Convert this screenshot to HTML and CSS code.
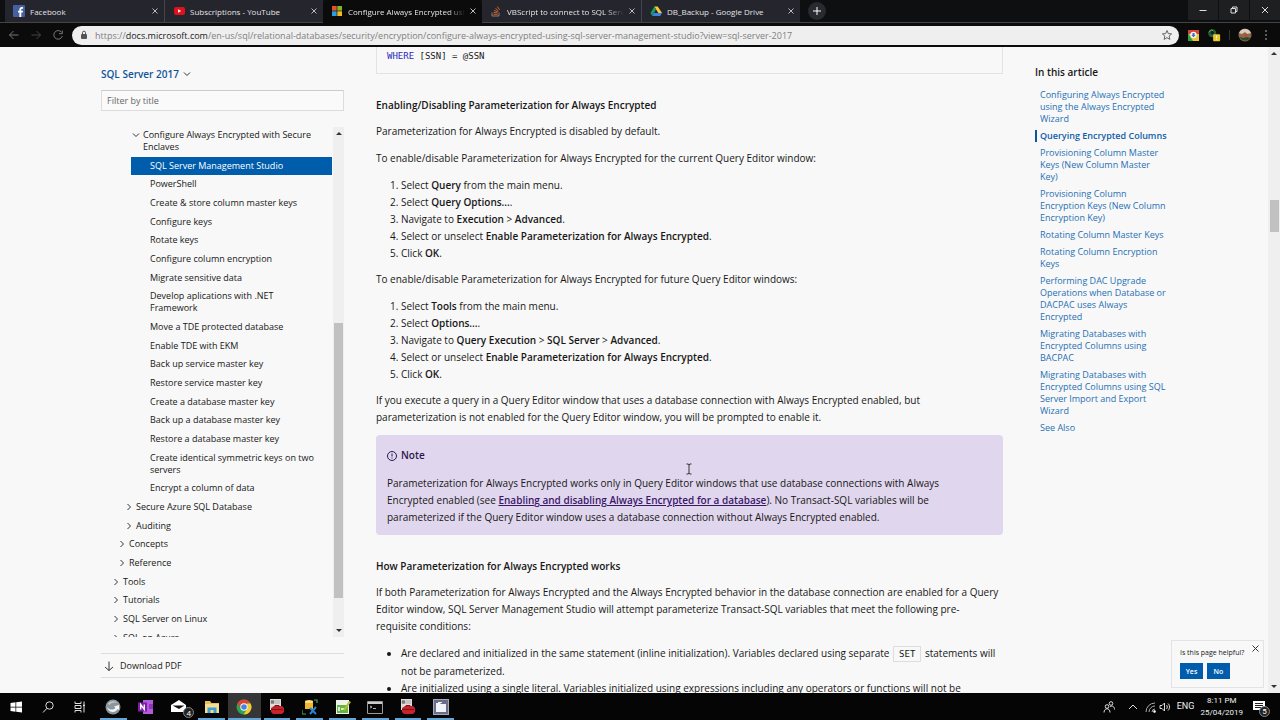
FILE: index.html
```html
<!DOCTYPE html>
<html lang="en">
<head>
  <meta charset="UTF-8">
  <title>Configure Always Encrypted using SQL Server Management Studio</title>
  <link rel="stylesheet" href="styles.css">
</head>
<body>
  <!-- tabs -->
  <header class="tab-strip">
    <div class="tab">
      <svg class="favicon" viewBox="0 0 12 12"><rect width="12" height="12" rx="1" fill="#4460a0"/><path d="M8.300 12V7.500h1.500l.2-1.800H8.300V4.700c0-.6.2-.9.900-.9h.9V2.200C9.900 2.100 9.400 2 8.800 2 7.300 2 6.400 2.900 6.400 4.500v1.200H5v1.800h1.400V12z" fill="#fff"/></svg>
      <span class="tab-name">Facebook</span>
      <button class="tab-close" aria-label="Close tab"><svg viewBox="0 0 6 6"><path d="M.5.5l5 5M5.500.5l-5 5"/></svg></button>
    </div>
    <div class="tab divided">
      <svg class="favicon" viewBox="0 0 12 12"><rect x="1" y="2" width="11" height="8" rx="2" fill="#e0101c"/><path d="M5 4.200v3.600L8.200 6z" fill="#fff"/></svg>
      <span class="tab-name">Subscriptions - YouTube</span>
      <button class="tab-close" aria-label="Close tab"><svg viewBox="0 0 6 6"><path d="M.5.5l5 5M5.500.5l-5 5"/></svg></button>
    </div>
    <div class="tab active">
      <svg class="favicon" viewBox="0 0 12 12"><path fill="#e8502c" d="M1 1h4.700v4.700H1z"/><path fill="#7db82b" d="M6.300 1H11v4.700H6.300z"/><path fill="#22a0e8" d="M1 6.300h4.700V11H1z"/><path fill="#fbb81a" d="M6.300 6.300H11V11H6.300z"/></svg>
      <span class="tab-name faded">Configure Always Encrypted using</span>
      <button class="tab-close" aria-label="Close tab"><svg viewBox="0 0 6 6"><path d="M.5.5l5 5M5.500.5l-5 5"/></svg></button>
    </div>
    <div class="tab">
      <svg class="favicon" viewBox="0 0 12 12" fill="none" stroke="#d2652b"><path d="M2 7.500v3.500h7V7.500" stroke="#8d7e72"/><path d="M3.500 9.300h4M3.600 7.400l4 .6M4.200 5.400l3.700 1.500M5.500 3.400l3 2.600M7.300 1.500l2.300 3.300"/></svg>
      <span class="tab-name faded">VBScript to connect to SQL Server</span>
      <button class="tab-close" aria-label="Close tab"><svg viewBox="0 0 6 6"><path d="M.5.5l5 5M5.500.5l-5 5"/></svg></button>
    </div>
    <div class="tab divided">
      <svg class="favicon" viewBox="0 0 12 12"><path d="M4.300 1.500h3.400L12 8H8.400z" fill="#fbcb2e"/><path d="M4.300 1.500L6 4.500 2.200 11 .5 8z" fill="#179c5c"/><path d="M4 8h8l-1.800 3H2.200z" fill="#3f80e8"/></svg>
      <span class="tab-name">DB_Backup - Google Drive</span>
      <button class="tab-close" aria-label="Close tab"><svg viewBox="0 0 6 6"><path d="M.5.5l5 5M5.500.5l-5 5"/></svg></button>
    </div>
    <button class="new-tab" aria-label="New tab"><svg viewBox="0 0 8 8"><path d="M4 0v8M0 4h8"/></svg></button>
    <div class="window-buttons">
      <button aria-label="Minimize"><svg viewBox="0 0 8 8"><path d="M.5 4.500h7"/></svg></button>
      <button aria-label="Restore"><svg viewBox="0 0 8 8"><path d="M1 2.500h4.500V7H1zM2.500 2.500V1H7v4.500H5.500"/></svg></button>
      <button aria-label="Close"><svg viewBox="0 0 8 8"><path d="M1 1l6 6M7 1L1 7"/></svg></button>
    </div>
  </header>

  <nav class="toolbar">
    <button aria-label="Back"><svg viewBox="0 0 12 12"><path d="M10.500 6h-9M5.500 2l-4 4 4 4"/></svg></button>
    <button class="dim" aria-label="Forward"><svg viewBox="0 0 12 12"><path d="M1.500 6h9M6.500 2l4 4-4 4"/></svg></button>
    <button aria-label="Reload"><svg viewBox="0 0 12 12"><path d="M9.500 3.200A4.300 4.300 0 1 0 10.300 7M10.300 1.500v3.200H7"/></svg></button>
    <div class="address">
      <svg class="lock" viewBox="0 0 8 10"><rect x="1" y="4" width="6" height="5" rx="1" fill="#555"/><path d="M2.500 4V2.700a1.500 1.500 0 0 1 3 0V4" fill="none" stroke="#555"/></svg>
      <p class="url">https://<b>docs.microsoft.com</b>/en-us/sql/relational-databases/security/encryption/configure-always-encrypted-using-sql-server-management-studio?view=sql-server-2017</p>
      <svg class="star" viewBox="0 0 12 12"><path d="M6 1.500l1.300 3.100 3.300.3-2.500 2.200.8 3.300L6 8.700l-2.900 1.700.8-3.300-2.500-2.200 3.300-.3z" fill="none" stroke="#666"/></svg>
    </div>
    <div class="extensions">
      <svg viewBox="0 0 12 12"><rect x="1" y="1" width="11" height="11" fill="#e8c532"/><path d="M1 1h11v4H1z" fill="#d94336"/><path d="M1 4l5 8H1z" fill="#2f9e51"/><circle cx="6.500" cy="6" r="3.200" fill="#f3f3f3"/><path d="M5.500 4h2v2h1.200L6.500 8.300 4.300 6h1.200z" fill="#3c6cc4"/></svg>
      <svg class="wide" viewBox="0 0 16 16"><circle cx="6" cy="6" r="4.500" fill="#25602f"/><circle cx="6" cy="5.500" r="2" fill="#111d42"/><path d="M2 5l3-3 2 1" stroke="#7cae3d" fill="none"/><rect x="7" y="7" width="8" height="8" rx="1" fill="#e7c82f"/><path d="M11 8.500v3M11 12.500v1" stroke="#fff"/></svg>
      <i class="divider"></i>
      <svg class="avatar" viewBox="0 0 14 14"><circle cx="7" cy="7" r="6.500" fill="#8c6a4a"/><path d="M1 5a6.500 6.500 0 0 1 12 0L9 6 7 4 4 6z" fill="#d8cfc0"/><path d="M1.500 9l4 1 3-1 4 1a6.500 6.500 0 0 1-11-1z" fill="#34472a"/><circle cx="8" cy="7" r="1.500" fill="#c0492c"/></svg>
      <svg viewBox="0 0 12 12" fill="#777"><circle cx="6" cy="2" r="1"/><circle cx="6" cy="6" r="1"/><circle cx="6" cy="10" r="1"/></svg>
    </div>
  </nav>

  <!-- page -->
  <div class="viewport">
    <div class="layout">
      <aside class="sidebar">
        <a class="version" href="#">SQL Server 2017 <svg viewBox="0 0 8 8"><path d="M1 2.500l3 3 3-3"/></svg></a>
        <input class="filter" type="text" placeholder="Filter by title" aria-label="Filter by title">
        <div class="tree">
          <ul>
            <li class="level-4 branch open"><svg viewBox="0 0 8 8"><path d="M1 2.500l3 3 3-3"/></svg><a href="#">Configure Always Encrypted with Secure Enclaves</a></li>
            <li class="leaf selected"><a href="#">SQL Server Management Studio</a></li>
            <li class="leaf"><a href="#">PowerShell</a></li>
            <li class="leaf"><a href="#">Create &amp; store column master keys</a></li>
            <li class="leaf"><a href="#">Configure keys</a></li>
            <li class="leaf"><a href="#">Rotate keys</a></li>
            <li class="leaf"><a href="#">Configure column encryption</a></li>
            <li class="leaf"><a href="#">Migrate sensitive data</a></li>
            <li class="leaf"><a href="#">Develop aplications with .NET Framework</a></li>
            <li class="leaf"><a href="#">Move a TDE protected database</a></li>
            <li class="leaf"><a href="#">Enable TDE with EKM</a></li>
            <li class="leaf"><a href="#">Back up service master key</a></li>
            <li class="leaf"><a href="#">Restore service master key</a></li>
            <li class="leaf"><a href="#">Create a database master key</a></li>
            <li class="leaf"><a href="#">Back up a database master key</a></li>
            <li class="leaf"><a href="#">Restore a database master key</a></li>
            <li class="leaf"><a href="#">Create identical symmetric keys on two servers</a></li>
            <li class="leaf"><a href="#">Encrypt a column of data</a></li>
            <li class="level-3 branch"><svg viewBox="0 0 8 8"><path d="M2.500 1l3 3-3 3"/></svg><a href="#">Secure Azure SQL Database</a></li>
            <li class="level-3 branch"><svg viewBox="0 0 8 8"><path d="M2.500 1l3 3-3 3"/></svg><a href="#">Auditing</a></li>
            <li class="level-2 branch"><svg viewBox="0 0 8 8"><path d="M2.500 1l3 3-3 3"/></svg><a href="#">Concepts</a></li>
            <li class="level-2 branch"><svg viewBox="0 0 8 8"><path d="M2.500 1l3 3-3 3"/></svg><a href="#">Reference</a></li>
            <li class="level-1 branch"><svg viewBox="0 0 8 8"><path d="M2.500 1l3 3-3 3"/></svg><a href="#">Tools</a></li>
            <li class="level-1 branch"><svg viewBox="0 0 8 8"><path d="M2.500 1l3 3-3 3"/></svg><a href="#">Tutorials</a></li>
            <li class="level-1 branch"><svg viewBox="0 0 8 8"><path d="M2.500 1l3 3-3 3"/></svg><a href="#">SQL Server on Linux</a></li>
            <li class="level-1 branch"><svg viewBox="0 0 8 8"><path d="M2.500 1l3 3-3 3"/></svg><a href="#">SQL on Azure</a></li>
          </ul>
          <div class="scrollbar tree-bar">
            <svg viewBox="0 0 6 6"><path d="M0 5h6L3 2z"/></svg>
            <div class="track"><div class="thumb"></div></div>
            <svg viewBox="0 0 6 6"><path d="M0 1h6L3 4z"/></svg>
          </div>
        </div>
        <a class="download" href="#"><svg viewBox="0 0 10 10"><path d="M5 .5v9M1 6l4 3.500L9 6"/></svg>Download PDF</a>
      </aside>

      <main class="article">
        <pre class="code"><code><span class="keyword">WHERE</span> [SSN] = @SSN</code></pre>
        <h4>Enabling/Disabling Parameterization for Always Encrypted</h4>
        <p>Parameterization for Always Encrypted is disabled by default.</p>
        <p>To enable/disable Parameterization for Always Encrypted for the current Query Editor window:</p>
        <ol>
          <li>Select <strong>Query</strong> from the main menu.</li>
          <li>Select <strong>Query Options...</strong>.</li>
          <li>Navigate to <strong>Execution</strong> &gt; <strong>Advanced</strong>.</li>
          <li>Select or unselect <strong>Enable Parameterization for Always Encrypted</strong>.</li>
          <li>Click <strong>OK</strong>.</li>
        </ol>
        <p>To enable/disable Parameterization for Always Encrypted for future Query Editor windows:</p>
        <ol>
          <li>Select <strong>Tools</strong> from the main menu.</li>
          <li>Select <strong>Options...</strong>.</li>
          <li>Navigate to <strong>Query Execution</strong> &gt; <strong>SQL Server</strong> &gt; <strong>Advanced</strong>.</li>
          <li>Select or unselect <strong>Enable Parameterization for Always Encrypted</strong>.</li>
          <li>Click <strong>OK</strong>.</li>
        </ol>
        <p>If you execute a query in a Query Editor window that uses a database connection with Always Encrypted enabled, but parameterization is not enabled for the Query Editor window, you will be prompted to enable it.</p>
        <div class="note">
          <p class="note-title"><svg viewBox="0 0 10 10"><circle cx="5" cy="5" r="4.500"/><path d="M5 2.500v3M5 6.500v1"/></svg>Note</p>
          <p>Parameterization for Always Encrypted works only in Query Editor windows that use database connections with Always Encrypted enabled (see <a href="#">Enabling and disabling Always Encrypted for a database</a>). No Transact-SQL variables will be parameterized if the Query Editor window uses a database connection without Always Encrypted enabled.</p>
        </div>
        <h4>How Parameterization for Always Encrypted works</h4>
        <p>If both Parameterization for Always Encrypted and the Always Encrypted behavior in the database connection are enabled for a Query Editor window, SQL Server Management Studio will attempt parameterize Transact-SQL variables that meet the following pre-requisite conditions:</p>
        <ul>
          <li>Are declared and initialized in the same statement (inline initialization). Variables declared using separate <code>SET</code> statements will not be parameterized.</li>
          <li>Are initialized using a single literal. Variables initialized using expressions including any operators or functions will not be parameterized.</li>
        </ul>
      </main>

      <nav class="toc">
        <h3>In this article</h3>
        <ul>
          <li><a href="#">Configuring Always Encrypted using the Always Encrypted Wizard</a></li>
          <li class="current"><a href="#">Querying Encrypted Columns</a></li>
          <li><a href="#">Provisioning Column Master Keys (New Column Master Key)</a></li>
          <li><a href="#">Provisioning Column Encryption Keys (New Column Encryption Key)</a></li>
          <li><a href="#">Rotating Column Master Keys</a></li>
          <li><a href="#">Rotating Column Encryption Keys</a></li>
          <li><a href="#">Performing DAC Upgrade Operations when Database or DACPAC uses Always Encrypted</a></li>
          <li><a href="#">Migrating Databases with Encrypted Columns using BACPAC</a></li>
          <li><a href="#">Migrating Databases with Encrypted Columns using SQL Server Import and Export Wizard</a></li>
          <li><a href="#">See Also</a></li>
        </ul>
      </nav>
    </div>

    <div class="scrollbar page-bar">
      <svg viewBox="0 0 6 6"><path d="M0 5h6L3 2z"/></svg>
      <div class="track"><div class="thumb"></div></div>
      <svg viewBox="0 0 6 6"><path d="M0 1h6L3 4z"/></svg>
    </div>

    <div class="feedback">
      <p>Is this page helpful?</p>
      <button class="answer">Yes</button>
      <button class="answer">No</button>
      <button class="dismiss" aria-label="Dismiss"><svg viewBox="0 0 7 7"><path d="M.5.5l6 6M6.500.5l-6 6"/></svg></button>
    </div>
    <svg class="cursor" viewBox="0 0 6 12"><path d="M.5 1H2l1 .7L4 1h1.500M3 1.500v9M.5 11H2l1-.7 1 .7h1.500"/></svg>
  </div>

  <!-- taskbar -->
  <footer class="taskbar">
    <div class="system">
      <button aria-label="Start"><svg viewBox="0 0 16 16" fill="#fff"><path d="M2.500 4l5-.7v4.400h-5zM8.200 3.200L14 2.400v5.300H8.200zM2.500 8.400h5v4.300l-5-.7zM8.200 8.400H14v5.200l-5.800-.8z"/></svg></button>
      <button aria-label="Search"><svg viewBox="0 0 16 16" fill="none" stroke="#ddd"><circle cx="9.500" cy="6.500" r="3.700"/><path d="M7 9.300l-4 4.200"/></svg></button>
      <button aria-label="Task view"><svg viewBox="0 0 16 16" fill="none" stroke="#ddd"><path d="M3 2.500v2h6v-2M3 13.500v-2h6v2M3 6.500h6v3H3zM12 2.500v3M12 8v5.500"/><path d="M11 6.500h2" stroke-width="2"/></svg></button>
    </div>
    <div class="apps">
      <button class="running" aria-label="Browser"><svg viewBox="0 0 16 16"><circle cx="8" cy="8" r="7.500" fill="#8c979d"/><path d="M2 8c2 3 6 3.500 8.500 1L9 7.500 14 6v5l-1.500-1C10 15 3.500 13.500 2 8z" fill="#f4f6f7"/><path d="M3 4.500C6 1.500 10 1.500 12.500 4 9.500 3 6 3.500 4.500 6z" fill="#c3cace"/></svg></button>
      <button aria-label="OneNote"><svg viewBox="0 0 16 16"><path d="M5 1h10v14H5z" fill="#b45bdc"/><path d="M11 5h4v5h-4z" fill="#8f35bd"/><path d="M0 3.500h9v9H0z" fill="#7a1fa6"/><path d="M2.700 10.500v-5l3.600 5v-5" fill="none" stroke="#fff" stroke-width="1.300"/></svg></button>
      <button class="mail" aria-label="Mail"><svg viewBox="0 0 16 16"><path d="M0 6l8-5 7 5v7H0z" fill="#fff"/><path d="M1.500 6.500h12L8 10z" fill="#111"/></svg><span class="count">4</span></button>
      <button class="running" aria-label="File Explorer"><svg viewBox="0 0 16 16"><path d="M1 2h5l1.500 2H15v10H1z" fill="#e8bd5b"/><path d="M1 5h14v9H1z" fill="#f8dd91"/><path d="M3.500 14V8.500h9V14h-3v-3h-3v3z" fill="#3ba0d5"/></svg></button>
      <button class="running focused" aria-label="Chrome"><svg viewBox="0 0 16 16"><circle cx="8" cy="8" r="7.500" fill="#31a350"/><path d="M1.500 4.200A7.500 7.500 0 0 1 14.500 4.400H8L4.800 9.800z" fill="#df4334"/><path d="M14.500 4.400A7.500 7.500 0 0 1 7.700 15.500L11.200 9.700 11 4.400z" fill="#f8ca32"/><circle cx="8" cy="8" r="3.700" fill="#fff"/><circle cx="8" cy="8" r="2.800" fill="#4285e8"/></svg></button>
      <button class="running" aria-label="Toolbox"><svg viewBox="0 0 16 16"><path d="M1 0h11v11H1z" fill="#dfdedb"/><path d="M2 1.500h3v3H2zM6 2h5M6 4h5" fill="#777" stroke="#888" stroke-width=".6"/><path d="M2 9l3-2h8l2 2v4l-2 2H4l-2-2z" fill="#c8232c"/><path d="M6 8V6.500h4V8M2 10.500h12" fill="none" stroke="#7e1218"/></svg></button>
      <button class="running" aria-label="Data tools"><svg viewBox="0 0 16 16"><path d="M3 2h8v8H3z" fill="#f1b72b"/><ellipse cx="7" cy="2.500" rx="4" ry="1.500" fill="#ffe17c"/><path d="M12 1h3v3M0 11v4h4" fill="none" stroke="#4da54a" stroke-width="1.200"/><path d="M8 9l6 6M14 8l-6 7" stroke="#2682d4" stroke-width="2"/></svg></button>
      <button class="running" aria-label="Editor"><svg viewBox="0 0 16 16"><path d="M1 1h13v14H1z" fill="#eef2e8"/><path d="M2 6h11v8H2z" fill="#65b441"/><path d="M4 8v4M6 10h4" stroke="#fff" stroke-width="1.500"/><path d="M8 11l6-9 2 1-6 8.500z" fill="#b6bd31"/></svg></button>
      <button class="running" aria-label="Command prompt"><svg viewBox="0 0 16 16"><path d="M.5 2.500h15v12H.5z" fill="#080808" stroke="#9a9a9a"/><path d="M1 3h14v2H1z" fill="#ccc"/><path d="M3 7l2 1-2 1M6 9.500h3" fill="none" stroke="#ddd" stroke-width=".8"/></svg></button>
      <button class="running" aria-label="Toolbox"><svg viewBox="0 0 16 16"><path d="M1 0h11v11H1z" fill="#dfdedb"/><path d="M2 1.500h3v3H2zM6 2h5M6 4h5" fill="#777" stroke="#888" stroke-width=".6"/><path d="M2 9l3-2h8l2 2v4l-2 2H4l-2-2z" fill="#c8232c"/><path d="M6 8V6.500h4V8M2 10.500h12" fill="none" stroke="#7e1218"/></svg></button>
      <button class="running" aria-label="Recorder"><svg viewBox="0 0 16 16"><path d="M0 0h16v16H0z" fill="#a5a8bb"/><path d="M1 1h14v14H1z" fill="#696d88"/><path d="M3 4h4l1 1h5v8H3z" fill="#f2f3f8"/><path d="M5 3h4v1H5z" fill="#f2f3f8"/></svg></button>
    </div>
    <div class="tray">
      <svg viewBox="0 0 12 12"><circle cx="4" cy="5.500" r="1.800"/><path d="M1 11.500c0-5 6-5 6 0"/><circle cx="8" cy="2.500" r="1.800"/><path d="M7 6c2-2 4.500-.5 4.500 2.500"/></svg>
      <svg class="chevron" viewBox="0 0 12 12"><path d="M2 8l4-4 4 4"/></svg>
      <svg viewBox="0 0 12 12"><path d="M2 11A9 9 0 0 1 11 2M5 11a6 6 0 0 1 6-6M8 11a3 3 0 0 1 3-3" stroke="#aaa"/><circle cx="10.500" cy="10.500" r="1" fill="#fff"/></svg>
      <svg viewBox="0 0 12 12"><path d="M1 4.500h2l2.500-2.500v8L3 7.500H1zM7.500 4c1 1 1 3 0 4M9 2.500c2 2 2 5 0 7"/></svg>
      <span class="lang">ENG</span>
      <time>8:11 PM<br>25/04/2019</time>
      <button class="alerts" aria-label="Notifications"><svg viewBox="0 0 12 12"><path d="M0 0h12v9H9v3L6 9H0z" fill="#fff" stroke="none"/><path d="M2 2.500h8M2 4.500h8M2 6.500h6" stroke="#222"/></svg><span class="count">5</span></button>
    </div>
  </footer>
</body>
</html>
```
FILE: styles.css
```css
* {
  box-sizing: border-box;
  margin: 0;
  padding: 0;
}

body {
  font-family: "Open Sans", "Noto Sans", sans-serif;
  font-size: 10px;
  line-height: 17px;
  color: #171717;
  background: #f8f8f8;
  height: 100vh;
  display: flex;
  flex-direction: column;
  overflow: hidden;
}

button {
  border: none;
  background: none;
  color: inherit;
  font-family: inherit;
  cursor: pointer;
}

svg {
  display: block;
  flex: none;
}

ul {
  list-style: none;
}

a {
  color: inherit;
  text-decoration: none;
}

/* tabs */
.tab-strip {
  display: flex;
  align-items: center;
  height: 23px;
  padding-left: 5px;
  background: #0d0f10;
  border-bottom: 1px solid #444;
}

.tab {
  display: flex;
  align-items: center;
  gap: 5px;
  flex: 0 1 159px;
  min-width: 0;
  height: 22px;
  padding: 0 6px 0 8px;
  background: #25252e;
  color: #e4e4e4;
  font-size: 8px;
}

.tab.active {
  background: #0b0b0b;
  height: 23px;
  border-radius: 6px 6px 0 0;
}

.tab.divided {
  border-left: 1px solid #45454d;
}

.favicon {
  width: 12px;
  height: 12px;
}

.tab-name {
  flex: 1;
  overflow: hidden;
  white-space: nowrap;
}

.tab-name.faded {
  mask-image: linear-gradient(to right, #000 85%, transparent);
}

.tab-close svg {
  width: 6px;
  height: 6px;
  fill: none;
  stroke: #bbb;
}

.new-tab {
  display: flex;
  align-items: center;
  justify-content: center;
  width: 18px;
  height: 18px;
  margin-left: 8px;
  border-radius: 50%;
  background: #292a31;
}

.new-tab svg {
  width: 8px;
  height: 8px;
  stroke: #fff;
}

.window-buttons {
  display: flex;
  gap: 1px;
  height: 20px;
  margin-left: auto;
  align-self: flex-start;
}

.window-buttons button {
  display: flex;
  align-items: center;
  justify-content: center;
  width: 30px;
  background: #1d1f20;
}

.window-buttons svg {
  width: 8px;
  height: 8px;
  fill: none;
  stroke: #ddd;
}

/* toolbar */
.toolbar {
  display: flex;
  align-items: center;
  height: 24px;
  padding-left: 3px;
  background: #0b0b0b;
}

.toolbar button {
  padding: 0 5px;
}

.toolbar button svg {
  width: 12px;
  height: 12px;
  fill: none;
  stroke: #777;
}

.toolbar button.dim svg {
  stroke: #444;
}

.address {
  display: flex;
  align-items: center;
  flex: 1;
  height: 19px;
  padding: 0 6px 0 8px;
  margin-left: 3px;
  border-radius: 10px;
  background: #efefef;
}

.lock {
  width: 8px;
  height: 10px;
}

.url {
  flex: 1;
  margin-left: 7px;
  font-size: 9px;
  white-space: nowrap;
  overflow: hidden;
  color: #808080;
}

.url b {
  font-weight: 400;
  color: #222;
}

.star {
  width: 12px;
  height: 12px;
}

.extensions {
  display: flex;
  align-items: center;
  gap: 8px;
  padding: 0 8px;
}

.extensions svg {
  width: 12px;
  height: 12px;
}

.extensions .wide,
.extensions .avatar {
  width: 14px;
  height: 14px;
}

.divider {
  width: 1px;
  height: 10px;
  background: #333;
}

/* page */
.viewport {
  position: relative;
  display: flex;
  flex: 1;
  min-height: 0;
  overflow: hidden;
}

.layout {
  display: grid;
  grid-template-columns: 243px minmax(0, 1fr) 132px;
  grid-template-rows: minmax(0, 1fr);
  gap: 32px;
  flex: 1;
  max-width: 1066px;
  min-height: 0;
  margin: 0 auto;
}

.sidebar {
  display: flex;
  flex-direction: column;
  min-height: 0;
  padding: 18px 0 15px;
  font-size: 9px;
  line-height: 12px;
}

.version {
  display: flex;
  align-items: center;
  gap: 4px;
  height: 18px;
  font-size: 10px;
  font-weight: 600;
  color: #0f5499;
}

.version svg,
.branch svg {
  width: 8px;
  height: 8px;
  fill: none;
  stroke: #333;
}

.filter {
  height: 21px;
  margin-top: 7px;
  padding: 0 5px;
  border: 1px solid #dcdcdc;
  border-top-color: #ccc;
  background: #fafafa;
  font-family: inherit;
  font-size: 9px;
}

.filter::placeholder {
  color: #666;
}

.tree {
  display: flex;
  flex: 1;
  min-height: 0;
  margin-top: 16px;
  overflow: hidden;
}

.tree ul {
  display: flex;
  flex-direction: column;
  justify-content: space-between;
  flex: 1;
  height: calc(100% + 11px);
  margin: -1px 3px 0 0;
}

.tree li {
  flex: none;
  padding: 3px 0;
}

.leaf {
  margin-left: 30px;
}

.tree .leaf {
  padding-left: 19px;
  padding-right: 14px;
}

.selected {
  background: #005dab;
  color: #fff;
}

.branch {
  display: flex;
  gap: 3px;
}

.branch svg {
  margin-top: 2px;
}

.level-1 {
  margin-left: 11px;
}

.level-2 {
  margin-left: 17px;
}

.level-3 {
  margin-left: 24px;
}

.level-4 {
  margin-left: 31px;
}

.scrollbar {
  display: flex;
  flex-direction: column;
  align-items: center;
  width: 11px;
  padding: 3px 0;
  background: #efefef;
}

.scrollbar svg {
  width: 6px;
  height: 6px;
  fill: #333;
}

.track {
  display: flex;
  flex-direction: column;
  flex: 1;
  width: 9px;
}

.thumb {
  background: #c1c1c1;
}

.tree-bar {
  margin-left: -2px;
}

.tree-bar .track::before {
  content: "";
  flex: 38;
}

.tree-bar .track::after {
  content: "";
  flex: 6;
}

.tree-bar .thumb {
  flex: 56;
}

.page-bar {
  width: 12px;
}

.page-bar .track::before {
  content: "";
  flex: 23;
}

.page-bar .track::after {
  content: "";
  flex: 72;
}

.page-bar .thumb {
  flex: 5;
}

.download {
  display: flex;
  align-items: center;
  gap: 6px;
  height: 25px;
  margin-top: 16px;
  padding-left: 3px;
  border-top: 1px solid #ddd;
  border-bottom: 1px solid #ddd;
  font-size: 9px;
}

.download svg {
  width: 10px;
  height: 10px;
  fill: none;
  stroke: #333;
}

/* article */
.code {
  height: 27px;
  display: flex;
  flex-direction: column;
  justify-content: flex-end;
  padding: 0 10px 9px;
  border: 1px solid #e3e3e3;
  border-top: none;
  font-family: "DejaVu Sans Mono", monospace;
  font-size: 9px;
  line-height: 15px;
}

.code code {
  font-family: inherit;
}

.keyword {
  color: #2b2bbd;
}

.article h4 {
  margin-top: 23px;
  font-size: 10px;
  font-weight: 600;
}

.article p {
  margin-top: 10px;
  padding-right: 3px;
}

.article h4 + p,
.article ol + p {
  margin-top: 9px;
}

.article ol,
.article ul {
  margin: 10px 0 0 25px;
}

.article ul {
  list-style: disc;
}

.article strong {
  font-weight: 600;
}

.article li code {
  margin: 0 1px;
  padding: 2px 5px;
  border: 1px solid #ddd;
  font-family: "DejaVu Sans Mono", monospace;
  font-size: 9px;
}

.note {
  margin-top: 9px;
  padding: 12px 20px 9px 11px;
  border-radius: 4px;
  background: #e0d6ed;
}

.article .note-title {
  display: flex;
  align-items: center;
  gap: 4px;
  margin-top: 0;
  font-weight: 600;
  color: #2d1650;
}

.article .note-title + p {
  margin-top: 11px;
}

.note-title svg {
  width: 10px;
  height: 10px;
  fill: none;
  stroke: #2d1650;
}

.note a {
  font-weight: 600;
  text-decoration: underline;
  color: #3b1769;
}

/* table of contents */
.toc {
  padding-top: 17px;
  font-size: 9px;
  line-height: 12px;
  color: #1f70b5;
}

.toc h3 {
  font-size: 10px;
  font-weight: 600;
  line-height: 17px;
  color: #171717;
}

.toc ul {
  display: flex;
  flex-direction: column;
  gap: 5px;
  margin-top: 8px;
}

.toc li {
  padding-left: 3px;
  border-left: 2px solid transparent;
}

.toc .current {
  border-color: #0f5499;
  color: #0f5fa8;
  font-weight: 600;
  white-space: nowrap;
}

/* overlays */
.feedback {
  position: absolute;
  right: 16px;
  bottom: 5px;
  width: 93px;
  padding: 6px 8px 8px;
  border: 1px solid #e3e3e3;
  background: #f8f8f8;
  font-size: 7px;
  line-height: 12px;
}

.feedback p {
  margin-bottom: 4px;
  white-space: nowrap;
}

.answer {
  width: 23px;
  height: 16px;
  margin-right: 2px;
  background: #005dab;
  color: #fff;
  font-size: 7px;
  font-weight: 600;
}

.dismiss {
  position: absolute;
  top: 4px;
  right: 4px;
}

.dismiss svg {
  width: 7px;
  height: 7px;
  stroke: #333;
}

.cursor {
  position: absolute;
  left: 686px;
  top: 416px;
  width: 6px;
  height: 12px;
  fill: none;
  stroke: #333;
}

/* taskbar */
.taskbar {
  display: flex;
  height: 27px;
  background: #050505;
  color: #eee;
}

.system {
  display: flex;
}

.system button {
  width: 32px;
  padding: 0 8px;
}

.system svg,
.apps svg {
  width: 16px;
  height: 16px;
}

.apps {
  display: flex;
  flex: 0 1 360px;
  margin-left: 1px;
}

.apps button {
  position: relative;
  display: flex;
  align-items: center;
  justify-content: center;
  flex: 1;
}

.apps .running::after {
  content: "";
  position: absolute;
  left: 3px;
  right: 3px;
  bottom: 0;
  height: 2px;
  background: #66a5d8;
}

.apps .focused {
  background: #363636;
}

.apps .focused::after {
  left: 0;
  right: 0;
}

.count {
  position: absolute;
  right: 1px;
  bottom: 2px;
  width: 11px;
  height: 11px;
  border: 1px solid #888;
  border-radius: 50%;
  background: #222;
  color: #fff;
  font-size: 8px;
  line-height: 9px;
  text-align: center;
}

.tray {
  display: flex;
  align-items: center;
  gap: 3px;
  margin-left: auto;
  padding-right: 10px;
  font-family: Roboto, sans-serif;
  font-size: 9px;
}

.tray svg {
  width: 12px;
  height: 12px;
  fill: none;
  stroke: #ddd;
}

.tray .chevron {
  margin-left: 9px;
  margin-right: 2px;
}

.lang {
  margin-left: 3px;
}

.tray time {
  margin: 0 7px 0 3px;
  font-size: 8px;
  line-height: 12px;
  text-align: center;
}

.alerts {
  position: relative;
  padding-right: 5px;
}

.alerts .count {
  right: 0;
  bottom: -4px;
}
```
